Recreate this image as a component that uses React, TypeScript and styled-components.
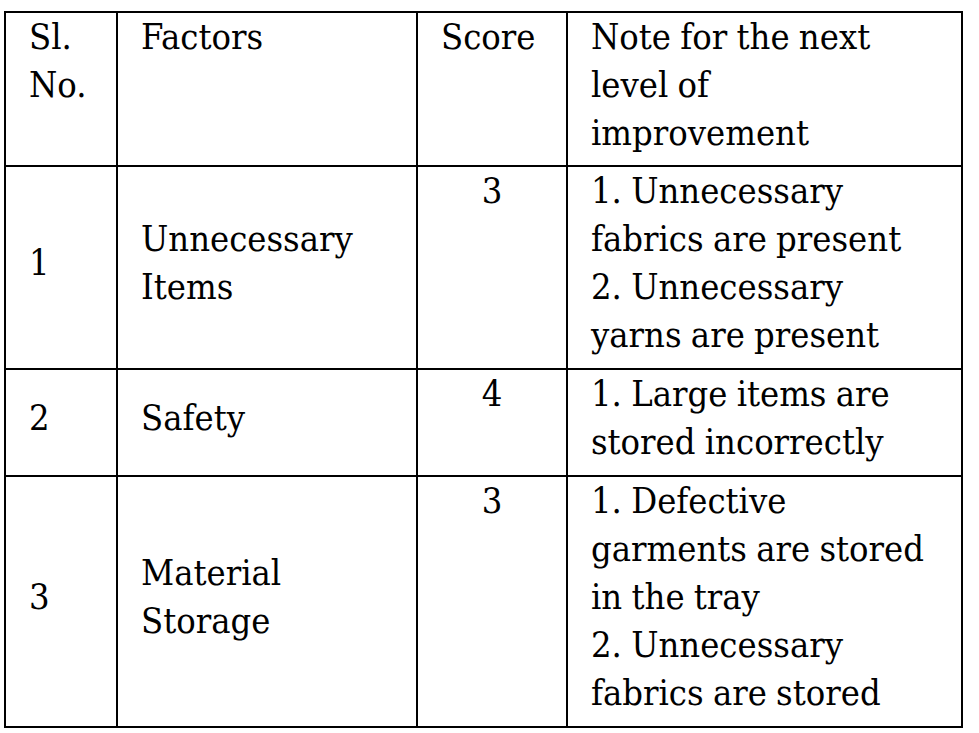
import React from "react";
import styled, { createGlobalStyle } from "styled-components";

const Global = createGlobalStyle`
  html, body { margin: 0; padding: 0; background: #fff; }
  body { font-family: "DejaVu Serif Condensed", "DejaVu Serif", serif; color: #000; }
`;

const Page = styled.div`
  padding: 11px 0 0 4px;
`;

const Table = styled.table`
  border-collapse: collapse;
  table-layout: fixed;
  width: 957px;
  font-family: "DejaVu Serif Condensed", "DejaVu Serif", serif;
  font-size: 36px;
  line-height: 48px;
`;

const Cell = styled.td<{ $align?: "left" | "center"; $valign?: "top" | "middle"; $head?: boolean }>`
  border: 2px solid #000;
  padding: 0 23px ${(p) => (p.$head ? 8 : 9)}px 23px;
  text-align: ${(p) => p.$align ?? "left"};
  vertical-align: ${(p) => p.$valign ?? "top"};
  font-weight: normal;
  font-family: inherit;
  font-size: inherit;
  line-height: inherit;
`;

const Head = styled(Cell).attrs({ as: "th", $head: true })``;

const Line = styled.div`
  white-space: nowrap;
  word-spacing: -1px;
`;

type Row = { no: string; factor: string[]; score: string; notes: string[] };

const rows: Row[] = [
  {
    no: "1",
    factor: ["Unnecessary", "Items"],
    score: "3",
    notes: ["1. Unnecessary", "fabrics are present", "2. Unnecessary", "yarns are present"],
  },
  { no: "2", factor: ["Safety"], score: "4", notes: ["1. Large items are", "stored incorrectly"] },
  {
    no: "3",
    factor: ["Material", "Storage"],
    score: "3",
    notes: [
      "1. Defective",
      "garments are stored",
      "in the tray",
      "2. Unnecessary",
      "fabrics are stored",
    ],
  },
];

export default function App() {
  return (
    <>
      <Global />
      <Page>
        <Table>
          <colgroup>
            <col style={{ width: 112 }} />
            <col style={{ width: 300 }} />
            <col style={{ width: 150 }} />
            <col style={{ width: 395 }} />
          </colgroup>
          <thead>
            <tr>
              <Head>
                <Line>Sl.</Line>
                <Line>No.</Line>
              </Head>
              <Head>
                <Line>Factors</Line>
              </Head>
              <Head>
                <Line>Score</Line>
              </Head>
              <Head>
                <Line>Note for the next</Line>
                <Line>level of</Line>
                <Line>improvement</Line>
              </Head>
            </tr>
          </thead>
          <tbody>
            {rows.map((r) => (
              <tr key={r.no}>
                <Cell $valign="middle">
                  <Line>{r.no}</Line>
                </Cell>
                <Cell $valign="middle">
                  {r.factor.map((f) => (
                    <Line key={f}>{f}</Line>
                  ))}
                </Cell>
                <Cell $align="center">
                  <Line>{r.score}</Line>
                </Cell>
                <Cell>
                  {r.notes.map((n, i) => (
                    <Line key={i}>{n}</Line>
                  ))}
                </Cell>
              </tr>
            ))}
          </tbody>
        </Table>
      </Page>
    </>
  );
}
